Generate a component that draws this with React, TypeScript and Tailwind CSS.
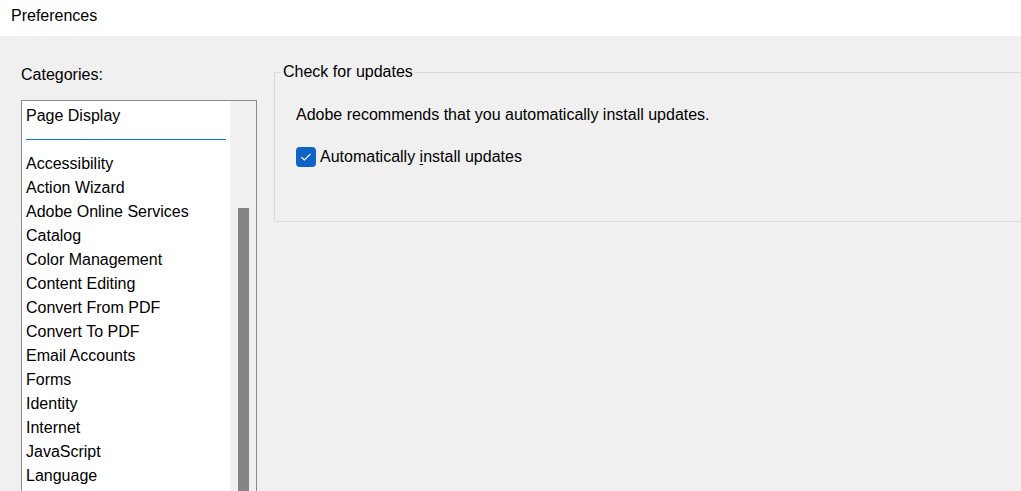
const categories = [
  'Accessibility',
  'Action Wizard',
  'Adobe Online Services',
  'Catalog',
  'Color Management',
  'Content Editing',
  'Convert From PDF',
  'Convert To PDF',
  'Email Accounts',
  'Forms',
  'Identity',
  'Internet',
  'JavaScript',
  'Language',
]

export default function App() {
  return (
    <div
      className="flex h-[491px] w-[1021px] flex-col overflow-hidden bg-[#f0f0f0] text-[16px] text-black"
      style={{ fontFamily: '"Liberation Sans", Arial, sans-serif' }}
    >
      <div className="h-[36px] shrink-0 bg-white pl-[11px] pt-[5px] leading-[22px]">
        Preferences
      </div>

      <div className="flex min-h-0 flex-1 pt-[25px]">
        <div className="flex w-[274px] shrink-0 flex-col pl-[21px]">
          <div className="mt-[3px] leading-[22px]">Categories:</div>
          <div className="mt-[14px] flex min-h-0 w-[236px] flex-1 border border-b-0 border-[#8c8c8c]">
            <div className="w-[208px] bg-white pl-[4px] pt-[3px]">
              <div className="leading-[24px]">Page Display</div>
              <div className="mr-[4px] mt-[11px] h-[2px] border-t border-[#0d74d9]" />
              <div className="mt-[11px]">
                {categories.map((c) => (
                  <div key={c} className="leading-[24px]">
                    {c}
                  </div>
                ))}
              </div>
            </div>
            <div className="flex flex-1 justify-center bg-[#f0f0f0] pt-[107px]">
              <div className="w-[11px] bg-[#858585]" />
            </div>
          </div>
        </div>

        <div className="flex-1 pt-[11px]">
          <div className="h-[150px] border border-r-0 border-[#dadada] pl-[21px]">
            <div className="-mt-[12px] -ml-[15px] w-fit bg-[#f0f0f0] px-[2px] leading-[22px]">
              Check for updates
            </div>
            <div className="mt-[21px] leading-[22px]">
              Adobe recommends that you automatically install updates.
            </div>
            <label className="mt-[20px] flex items-center gap-[4px] leading-[22px]">
              <span className="flex h-[20px] w-[20px] items-center justify-center rounded-[4px] bg-[#0f63c7]">
                <svg width="12" height="10" viewBox="0 0 12 10" fill="none">
                  <path d="M1.5 5.2 4.4 8 10.5 1.8" stroke="white" strokeWidth="1.2" />
                </svg>
              </span>
              <span>
                Automatically <span className="underline underline-offset-2">i</span>nstall updates
              </span>
            </label>
          </div>
        </div>
      </div>
    </div>
  )
}
